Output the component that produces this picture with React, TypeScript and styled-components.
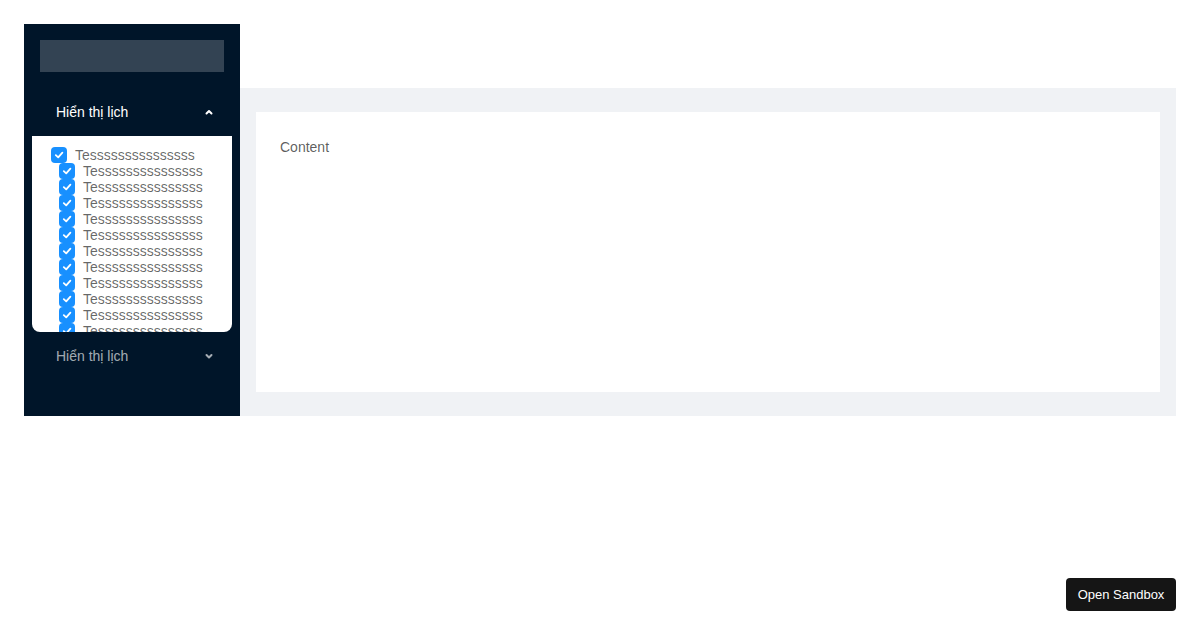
import React from 'react'
import styled, { createGlobalStyle } from 'styled-components'

const GlobalStyle = createGlobalStyle`
  body {
    margin: 0;
    background: #ffffff;
    font-family: 'Liberation Sans', Arial, sans-serif;
  }
`

const Page = styled.div`
  padding: 24px;
`
const Layout = styled.div`
  display: flex;
  align-items: stretch;
`
const Sider = styled.aside`
  width: 216px;
  flex-shrink: 0;
  background: #001529;
  display: flex;
  flex-direction: column;
`
const Logo = styled.div`
  height: 32px;
  margin: 16px;
  background: rgba(255, 255, 255, 0.2);
`
const Menu = styled.nav`
  display: flex;
  flex-direction: column;
  gap: 4px;
  padding: 4px 0;
`
const MenuItem = styled.div<{ $open?: boolean }>`
  height: 40px;
  display: flex;
  align-items: center;
  justify-content: space-between;
  padding: 0 26px 0 32px;
  font-size: 14px;
  color: ${(p) => (p.$open ? '#ffffff' : 'rgba(255, 255, 255, 0.65)')};
  cursor: pointer;
`
const SubPanel = styled.div`
  margin: 0 8px;
  height: 196px;
  overflow: hidden;
  background: #ffffff;
  border-radius: 0 0 8px 8px;
  padding: 11px 0 0 19px;
  box-sizing: border-box;
`
const CheckRow = styled.label<{ $child?: boolean }>`
  display: flex;
  align-items: center;
  gap: 8px;
  height: 16px;
  padding-left: ${(p) => (p.$child ? '8px' : '0')};
  font-size: 14px;
  color: rgba(0, 0, 0, 0.6);
  white-space: nowrap;
`
const Box = styled.span`
  width: 16px;
  height: 16px;
  flex-shrink: 0;
  background: #1890ff;
  border-radius: 4px;
  display: flex;
  align-items: center;
  justify-content: center;
`
const Main = styled.div`
  flex: 1;
  display: flex;
  flex-direction: column;
`
const Header = styled.header`
  height: 64px;
  background: #ffffff;
`
const ContentArea = styled.main`
  background: #f0f2f5;
  padding: 24px 16px;
`
const ContentBox = styled.div`
  background: #ffffff;
  min-height: 280px;
  padding: 24px;
  box-sizing: border-box;
  font-size: 14px;
  line-height: 22px;
  color: rgba(0, 0, 0, 0.65);
`
const SandboxButton = styled.button`
  position: fixed;
  right: 24px;
  bottom: 19px;
  width: 110px;
  height: 33px;
  border: none;
  border-radius: 4px;
  background: #151515;
  color: #ffffff;
  font-family: 'Liberation Sans', Arial, sans-serif;
  font-size: 13px;
  cursor: pointer;
`

const Chevron = ({ up }: { up?: boolean }) => (
  <svg width="10" height="10" viewBox="0 0 10 10">
    <polyline
      points={up ? '2.5,6.5 5,4 7.5,6.5' : '2.5,4 5,6.5 7.5,4'}
      fill="none"
      stroke="currentColor"
      strokeWidth="2"
      strokeLinecap="round"
      strokeLinejoin="round"
    />
  </svg>
)

const Check = () => (
  <Box>
    <svg width="10" height="10" viewBox="0 0 10 10">
      <polyline
        points="1.8,5.2 4.2,7.4 8.4,2.6"
        fill="none"
        stroke="#ffffff"
        strokeWidth="1.8"
        strokeLinecap="round"
        strokeLinejoin="round"
      />
    </svg>
  </Box>
)

const label = 'Te' + 's'.repeat(15)
const children = Array.from({ length: 11 }, (_, i) => i)

export default function App() {
  return (
    <Page>
      <GlobalStyle />
      <Layout>
        <Sider>
          <Logo />
          <Menu>
            <MenuItem $open>
              <span>Hiển thị lịch</span>
              <Chevron up />
            </MenuItem>
            <SubPanel>
              <CheckRow>
                <Check />
                <span>{label}</span>
              </CheckRow>
              {children.map((i) => (
                <CheckRow $child key={i}>
                  <Check />
                  <span>{label}</span>
                </CheckRow>
              ))}
            </SubPanel>
            <MenuItem>
              <span>Hiển thị lịch</span>
              <Chevron />
            </MenuItem>
          </Menu>
        </Sider>
        <Main>
          <Header />
          <ContentArea>
            <ContentBox>Content</ContentBox>
          </ContentArea>
        </Main>
      </Layout>
      <SandboxButton>Open Sandbox</SandboxButton>
    </Page>
  )
}
